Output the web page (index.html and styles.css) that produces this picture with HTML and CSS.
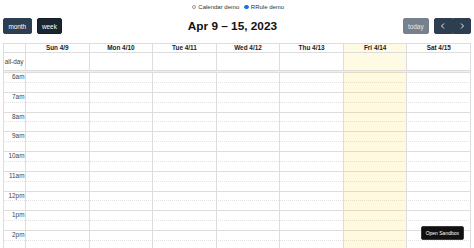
FILE: index.html
```html
<!DOCTYPE html>
<html lang="en">
<head>
<meta charset="utf-8">
<title>Calendar</title>
<link rel="stylesheet" href="styles.css">
</head>
<body>
<div class="demo-switch">
  <label class="opt"><span class="radio"></span>Calendar demo</label>
  <label class="opt"><span class="radio on"></span>RRule demo</label>
</div>
<div class="toolbar">
  <div class="chunk">
    <button class="btn">month</button>
    <button class="btn active">week</button>
  </div>
  <h2 class="title">Apr 9 – 15, 2023</h2>
  <div class="chunk">
    <button class="btn disabled">today</button>
    <div class="group">
      <button class="btn icon"><svg viewBox="0 0 8 8" width="8" height="8"><polyline points="5,1.5 2.5,4 5,6.5" fill="none" stroke="#fff" stroke-width="0.9"/></svg></button>
      <button class="btn icon"><svg viewBox="0 0 8 8" width="8" height="8"><polyline points="3,1.5 5.5,4 3,6.5" fill="none" stroke="#fff" stroke-width="0.9"/></svg></button>
    </div>
  </div>
</div>
<div class="cal">
  <div class="row head">
    <div class="cell axis"></div>
    <div class="cell">Sun 4/9</div>
    <div class="cell">Mon 4/10</div>
    <div class="cell">Tue 4/11</div>
    <div class="cell">Wed 4/12</div>
    <div class="cell">Thu 4/13</div>
    <div class="cell today">Fri 4/14</div>
    <div class="cell">Sat 4/15</div>
  </div>
  <div class="row allday">
    <div class="cell axis">all-day</div>
    <div class="cell"></div>
    <div class="cell"></div>
    <div class="cell"></div>
    <div class="cell"></div>
    <div class="cell"></div>
    <div class="cell today"></div>
    <div class="cell"></div>
  </div>
  <div class="divider"></div>
  <div class="body">
    <div class="slots">
      <div class="slot"><div class="label">6am</div><div class="lane"></div></div>
      <div class="slot minor"><div class="label"></div><div class="lane"></div></div>
      <div class="slot"><div class="label">7am</div><div class="lane"></div></div>
      <div class="slot minor"><div class="label"></div><div class="lane"></div></div>
      <div class="slot"><div class="label">8am</div><div class="lane"></div></div>
      <div class="slot minor"><div class="label"></div><div class="lane"></div></div>
      <div class="slot"><div class="label">9am</div><div class="lane"></div></div>
      <div class="slot minor"><div class="label"></div><div class="lane"></div></div>
      <div class="slot"><div class="label">10am</div><div class="lane"></div></div>
      <div class="slot minor"><div class="label"></div><div class="lane"></div></div>
      <div class="slot"><div class="label">11am</div><div class="lane"></div></div>
      <div class="slot minor"><div class="label"></div><div class="lane"></div></div>
      <div class="slot"><div class="label">12pm</div><div class="lane"></div></div>
      <div class="slot minor"><div class="label"></div><div class="lane"></div></div>
      <div class="slot"><div class="label">1pm</div><div class="lane"></div></div>
      <div class="slot minor"><div class="label"></div><div class="lane"></div></div>
      <div class="slot"><div class="label">2pm</div><div class="lane"></div></div>
      <div class="slot minor"><div class="label"></div><div class="lane"></div></div>
      <div class="slot"><div class="label"></div><div class="lane"></div></div>
    </div>
    <div class="cols">
      <div class="col axis"></div>
      <div class="col"></div>
      <div class="col"></div>
      <div class="col"></div>
      <div class="col"></div>
      <div class="col"></div>
      <div class="col today"></div>
      <div class="col"></div>
    </div>
  </div>
</div>
<a class="sandbox">Open Sandbox</a>
</body>
</html>
```
FILE: styles.css
```css
html, body {
  margin: 0;
  padding: 0;
  overflow: hidden;
  background: #fff;
}
body {
  font-family: "Liberation Sans", Arial, sans-serif;
  font-size: 6.4px;
  color: #212121;
  height: 248px;
}
.demo-switch {
  height: 14px;
  display: flex;
  justify-content: center;
  align-items: center;
  gap: 5px;
  font-size: 6px;
  color: #333;
  padding-left: 2px;
}
.opt {
  display: flex;
  align-items: center;
  gap: 2px;
}
.radio {
  width: 4.5px;
  height: 4.5px;
  border-radius: 50%;
  border: 0.6px solid #9a9a9a;
  box-sizing: border-box;
  background: #fff;
}
.radio.on {
  border: 0.8px solid #1a73e8;
  background: radial-gradient(circle, #1a73e8 0 1.3px, #fff 1.4px);
}
.toolbar {
  display: flex;
  justify-content: space-between;
  align-items: center;
  margin: 4px 3px 0;
  height: 16px;
}
.chunk {
  display: flex;
  align-items: center;
  gap: 5px;
}
.title {
  margin: 0;
  font-size: 11.8px;
  font-weight: bold;
  color: #111;
}
.btn {
  font-family: inherit;
  font-size: 6.4px;
  line-height: 9.6px;
  padding: 2.5px 4.4px;
  border: 1px solid #2c3e50;
  background: #2c3e50;
  color: #fff;
  border-radius: 2px;
  margin: 0;
  height: 16px;
  box-sizing: border-box;
}
.btn.active {
  background: #1a252f;
  border-color: #151e27;
}
.btn.disabled {
  background: #76818d;
  border-color: #76818d;
  color: #e4e7ea;
}
.group {
  display: flex;
}
.group .btn {
  width: 18.5px;
  padding: 0;
  display: flex;
  align-items: center;
  justify-content: center;
}
.group .btn:first-child {
  border-radius: 2px 0 0 2px;
}
.group .btn:last-child {
  border-radius: 0 2px 2px 0;
}
.cal {
  margin: 9px 3px 0;
  border-top: 1px solid #ddd;
  border-left: 1px solid #ddd;
}
.row {
  display: grid;
  grid-template-columns: 22px repeat(7, 1fr);
}
.cell {
  border-right: 1px solid #ddd;
  border-bottom: 1px solid #ddd;
}
.head .cell {
  height: 8px;
  line-height: 8px;
  text-align: center;
  font-weight: bold;
  color: #222;
}
.head .cell.today {
  background: #fffae3;
}
.allday .cell {
  height: 17px;
}
.allday .cell.axis {
  text-align: right;
  line-height: 17px;
  padding-right: 1.5px;
  color: #444;
}
.allday .cell.today {
  background: #fffae3;
}
.divider {
  height: 1px;
  background: #eee;
  border-right: 1px solid #ddd;
}
.body {
  position: relative;
}
.slot {
  display: grid;
  grid-template-columns: 22px 1fr;
  height: 9.88px;
  box-sizing: border-box;
  border-top: 1px solid #ddd;
}
.slot.minor {
  border-top: 1px dotted #e2e2e2;
}
.label {
  text-align: right;
  padding-right: 1.5px;
  line-height: 8.8px;
  color: #444;
}
.cols {
  position: absolute;
  inset: 0;
  display: grid;
  grid-template-columns: 22px repeat(7, 1fr);
  pointer-events: none;
}
.col {
  border-right: 1px solid #ddd;
}
.col.today {
  background: rgba(255, 220, 40, 0.15);
}
.sandbox {
  position: fixed;
  right: 10px;
  bottom: 8px;
  background: #111;
  color: #fff;
  font-size: 5px;
  line-height: 8px;
  padding: 2px 4px;
  border: 1px solid #3a3a3a;
  border-radius: 2px;
}
```
